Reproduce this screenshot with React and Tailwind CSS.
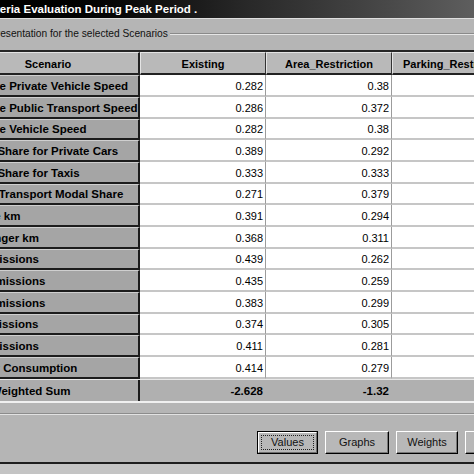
import React from "react";

const rows = [
  ["Average Private Vehicle Speed", "0.282", "0.38"],
  ["Average Public Transport Speed", "0.286", "0.372"],
  ["Average Vehicle Speed", "0.282", "0.38"],
  ["Modal Share for Private Cars", "0.389", "0.292"],
  ["Modal Share for Taxis", "0.333", "0.333"],
  ["Public Transport Modal Share", "0.271", "0.379"],
  ["Vehicle km", "0.391", "0.294"],
  ["Passenger km", "0.368", "0.311"],
  ["CO Emissions", "0.439", "0.262"],
  ["NOx Emissions", "0.435", "0.259"],
  ["CO2 Emissions", "0.383", "0.299"],
  ["HC Emissions", "0.374", "0.305"],
  ["PM Emissions", "0.411", "0.281"],
  ["Energy Consumption", "0.414", "0.279"],
];

const heights = ["h-[22px]", "h-[22px]", "h-[21px]"];

function Btn({ label, w, def }) {
  if (def) {
    return (
      <div className={`${w} h-[23px] border border-black bg-[#b8b8b8] shrink-0`}>
        <div className="w-full h-full border border-t-white border-l-white border-r-[#6e6e6e] border-b-[#6e6e6e] p-[2px]">
          <div className="w-full h-full border border-dotted border-[#222] flex items-center justify-center text-[11px] leading-none text-[#111]">
            {label}
          </div>
        </div>
      </div>
    );
  }
  return (
    <div
      className={`${w} h-[23px] shrink-0 bg-[#b8b8b8] border border-t-white border-l-white border-r-black border-b-black shadow-[inset_-1px_-1px_0_#777] flex items-center justify-center text-[11px] leading-none text-[#111]`}
    >
      {label}
    </div>
  );
}

export default function App() {
  return (
    <div className="w-[474px] h-[474px] overflow-hidden bg-[#b5b5b5] flex flex-col font-['Liberation_Sans',Arial,sans-serif] text-black">
      {/* title bar */}
      <div className="h-[18px] shrink-0 bg-linear-to-r from-black via-[#262626] to-[#5e5e5e] text-white font-bold text-[11.5px] leading-[18px] whitespace-nowrap overflow-hidden">
        <span className="inline-block -ml-[20px]">Criteria Evaluation During Peak Period .</span>
      </div>
      <div className="h-px shrink-0 bg-[#dedede]" />

      {/* group label */}
      <div className="h-[31px] shrink-0 flex items-start pt-[8px] overflow-hidden">
        <span className="text-[10.2px] leading-[13px] -ml-[10px] whitespace-nowrap shrink-0 text-[#111]">
          Presentation for the selected Scenarios
        </span>
        <div className="flex-1 mt-[6px] ml-[2px] h-[2px] border-t border-t-[#8a8a8a] border-b border-b-[#e6e6e6]" />
      </div>

      {/* grid */}
      <div className="-ml-[42px] w-[560px] shrink-0 flex flex-col border-t-2 border-t-[#262626]">
        {/* header */}
        <div className="h-[23px] flex text-[11px] font-bold">
          <div className="w-[182px] shrink-0 bg-[#b9b9b9] border-t border-t-[#e4e4e4] border-b-2 border-b-[#222] border-r-2 border-r-[#222] flex items-center justify-center pt-[2px]">
            Scenario
          </div>
          <div className="w-[126px] shrink-0 bg-[#b9b9b9] border-t border-t-[#e4e4e4] border-l border-l-[#e4e4e4] border-b-2 border-b-[#222] border-r border-r-[#333] flex items-center justify-center pt-[2px]">
            Existing
          </div>
          <div className="w-[126px] shrink-0 bg-[#b9b9b9] border-t border-t-[#e4e4e4] border-l border-l-[#e4e4e4] border-b-2 border-b-[#222] border-r border-r-[#333] flex items-center justify-center pt-[2px]">
            Area_Restriction
          </div>
          <div className="w-[126px] shrink-0 bg-[#b9b9b9] border-t border-t-[#e4e4e4] border-l border-l-[#e4e4e4] border-b-2 border-b-[#222] border-r border-r-[#333] flex items-center justify-center pt-[2px]">
            Parking_Restriction
          </div>
        </div>

        {rows.map((r, i) => (
          <div key={i} className={`${heights[i % 3]} flex`}>
            <div className="w-[182px] shrink-0 bg-[#a5a5a5] border-t border-t-[#cfcfcf] border-b-2 border-b-[#1c1c1c] border-r-2 border-r-[#1c1c1c] flex items-center pl-[3px] pt-[2px] text-[11.5px] font-bold whitespace-nowrap overflow-hidden">
              {r[0]}
            </div>
            <div className="w-[126px] shrink-0 bg-white border-b-2 border-b-[#c6c6c6] border-r border-r-[#9c9c9c] flex items-center justify-end pr-[2px] pt-[2px] text-[11px]">
              {r[1]}
            </div>
            <div className="w-[126px] shrink-0 bg-white border-b-2 border-b-[#c6c6c6] border-r border-r-[#9c9c9c] flex items-center justify-end pr-[2px] pt-[2px] text-[11px]">
              {r[2]}
            </div>
            <div className="w-[126px] shrink-0 bg-white border-b-2 border-b-[#c6c6c6] border-r border-r-[#9c9c9c]" />
          </div>
        ))}

        {/* weighted sum */}
        <div className="h-[24px] flex bg-[#b0b0b0] border-t border-t-[#e8e8e8] border-b-2 border-b-[#f0f0f0]">
          <div className="w-[182px] shrink-0 bg-[#ababab] border-r-2 border-r-[#1c1c1c] flex items-center pl-[3px] pt-[2px] text-[11.5px] font-bold whitespace-nowrap overflow-hidden">
            Total Weighted Sum
          </div>
          <div className="w-[126px] shrink-0 flex items-center justify-end pr-[3px] pt-[2px] text-[11.5px] font-bold">
            -2.628
          </div>
          <div className="w-[126px] shrink-0 flex items-center justify-end pr-[3px] pt-[2px] text-[11.5px] font-bold">
            -1.32
          </div>
          <div className="w-[126px] shrink-0" />
        </div>
      </div>

      {/* spacer + groove */}
      <div className="h-[10px] shrink-0" />
      <div className="h-[2px] shrink-0 border-t border-t-[#8c8c8c] border-b border-b-[#e2e2e2]" />

      {/* button panel */}
      <div className="h-[47px] shrink-0 flex items-start pt-[16px] pl-[257px] gap-[7px]">
        <Btn label="Values" w="w-[61px]" def />
        <Btn label="Graphs" w="w-[64px]" />
        <Btn label="Weights" w="w-[62px]" />
        <Btn label="Close" w="w-[62px]" />
      </div>
      <div className="h-[2px] shrink-0 bg-[#1e1e1e]" />
      <div className="flex-1 bg-[#c4c4c4]" />
    </div>
  );
}
